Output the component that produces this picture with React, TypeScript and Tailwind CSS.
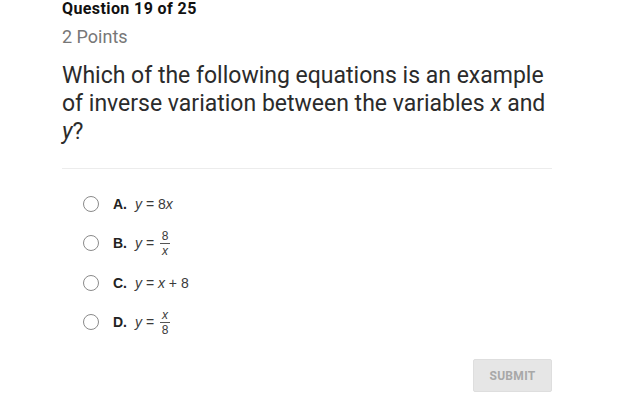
import React from "react";

const Radio = () => (
  <span className="w-[16px] h-[16px] rounded-full border-[1.5px] border-[#8a8a8a] bg-white shrink-0" />
);

const V = ({ children }: { children: React.ReactNode }) => <i className="italic">{children}</i>;

const Frac = ({ top, bottom }: { top: React.ReactNode; bottom: React.ReactNode }) => (
  <span className="inline-flex flex-col items-center leading-none text-[12px] mx-[2px]">
    <span className="px-[1px] pb-[1px]">{top}</span>
    <span className="w-[10px] border-t border-[#555]" />
    <span className="px-[1px] pt-[1px]">{bottom}</span>
  </span>
);

const Option = ({ letter, children, h }: { letter: string; children: React.ReactNode; h: string }) => (
  <div className={`flex items-center ${h}`}>
    <Radio />
    <span className="ml-[14px] w-[22px] font-bold text-[14px] text-[#222]" style={{ fontFamily: '"Liberation Sans", Arial, sans-serif' }}>
      {letter}
    </span>
    <span className="flex items-center text-[14px] text-[#3a3a3a] whitespace-pre" style={{ fontFamily: '"Liberation Sans", Arial, sans-serif' }}>
      {children}
    </span>
  </div>
);

export default function App() {
  return (
    <div className="w-[632px] h-[400px] bg-white overflow-hidden" style={{ fontFamily: 'Roboto, "Noto Sans", sans-serif' }}>
      <div className="pl-[62px] w-[552px]">
        <div className="text-[16px] font-bold text-[#111] leading-[18px] tracking-[0.4px]">Question 19 of 25</div>
        <div className="mt-[8px] text-[18px] text-[#777] leading-[22px]">2 Points</div>
        <div className="mt-[14px] text-[23px] text-[#2b2b2b] leading-[28px] pr-[2px]">
          Which of the following equations is an example of inverse variation between the variables <i>x</i> and <i>y</i>?
        </div>
        <div className="mt-[22px] border-t border-[#ececec]" />
        <div className="pl-[21px] mt-[25px] flex flex-col">
          <Option letter="A." h="h-[20px]">
            <V>y</V>{" = 8"}<V>x</V>
          </Option>
          <div className="h-[14px]" />
          <Option letter="B." h="h-[30px]">
            <V>y</V>{" = "}<Frac top="8" bottom={<V>x</V>} />
          </Option>
          <div className="h-[15px]" />
          <Option letter="C." h="h-[20px]">
            <V>y</V>{" = "}<V>x</V>{" + 8"}
          </Option>
          <div className="h-[14px]" />
          <Option letter="D." h="h-[30px]">
            <V>y</V>{" = "}<Frac top={<V>x</V>} bottom="8" />
          </Option>
        </div>
        <div className="flex justify-end mt-[22px]">
          <button className="w-[79px] h-[33px] bg-[#e6e6e6] border border-[#dedede] rounded-[2px] text-[12px] font-bold text-[#a8a8a8] tracking-[0.3px]">
            SUBMIT
          </button>
        </div>
      </div>
    </div>
  );
}
